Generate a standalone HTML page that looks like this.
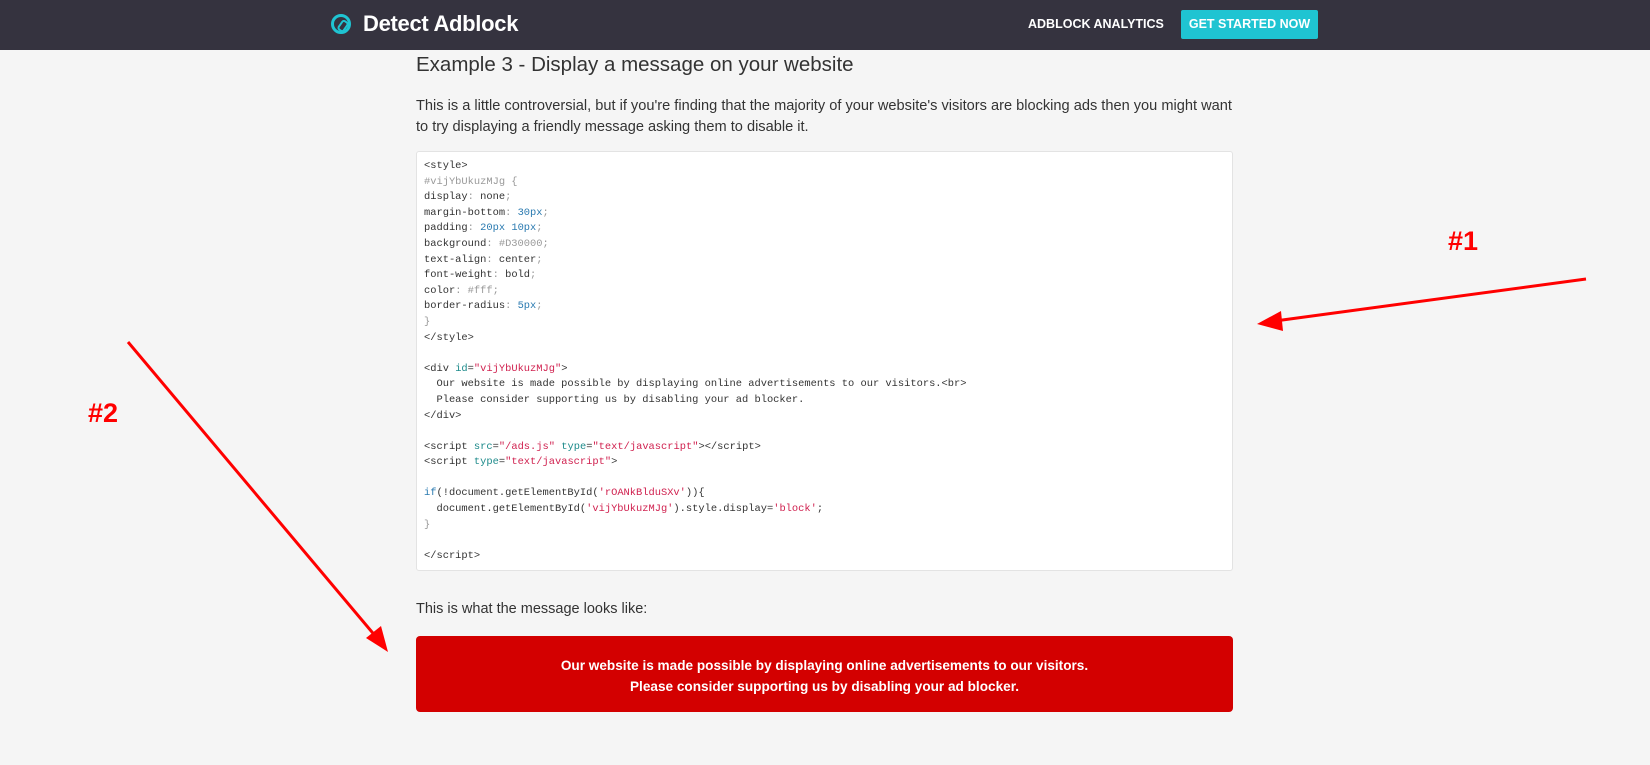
<!DOCTYPE html>
<html><head><meta charset="utf-8"><style>
*{margin:0;padding:0;box-sizing:border-box}
body{width:1650px;height:765px;background:#f5f5f5;font-family:"Liberation Sans",sans-serif;position:relative;overflow:hidden;color:#333}
.nav{position:absolute;left:0;top:0;width:1650px;height:50px;background:#35333f}
.logo{position:absolute;left:331px;top:14px;width:20px;height:20px;border:3px solid #1fc4d2;border-radius:50%}
.logo:after{content:"";position:absolute;left:5px;top:3px;width:4px;height:8px;border:2px solid #1fc4d2;border-radius:3px;transform:rotate(35deg)}
.brand{position:absolute;left:363px;top:11px;color:#fff;font-weight:bold;font-size:22px;letter-spacing:-0.3px}
.an{position:absolute;left:1028px;top:17px;color:#fff;font-weight:bold;font-size:12.5px}
.btn{position:absolute;left:1181px;top:10px;width:137px;height:29px;background:#1fc4d2;color:#fff;font-weight:bold;font-size:12.5px;text-align:center;line-height:29px;border-radius:2px}
h1{position:absolute;left:416px;top:53px;font-weight:normal;font-size:20.5px;color:#333}
.p{position:absolute;left:416px;top:96px;font-size:14.6px;line-height:20.5px;color:#333;width:830px}
.code{position:absolute;left:416px;top:151px;width:817px;height:420px;background:#fff;border:1px solid #e3e3e3;border-radius:3px;padding:7px 7px;font-family:"Liberation Mono",monospace;font-size:10.4px;line-height:15.6px;color:#333;white-space:pre}
.g{color:#999}.b{color:#2a7ab0}.r{color:#d0214f}.t{color:#1c8a8a}
.w{position:absolute;left:416px;top:601px;font-size:14.5px;color:#333}
.msg{position:absolute;left:416px;top:636px;width:817px;height:76px;background:#d30000;border-radius:4px;color:#fff;font-weight:bold;font-size:13.6px;text-align:center;padding-top:19px;line-height:21px}
.lab{position:absolute;color:#f00;font-weight:bold;font-size:27px}
</style></head><body>
<div class="nav"><div class="logo"></div><div class="brand">Detect Adblock</div><div class="an">ADBLOCK ANALYTICS</div><div class="btn">GET STARTED NOW</div></div>
<h1>Example 3 - Display a message on your website</h1>
<div class="p">This is a little controversial, but if you're finding that the majority of your website's visitors are blocking ads then you might want to try displaying a friendly message asking them to disable it.</div>
<div class="code">&lt;style&gt;
<span class="g">#vijYbUkuzMJg {</span>
display<span class="g">:</span> none<span class="g">;</span>
margin-bottom<span class="g">:</span> <span class="b">30px</span><span class="g">;</span>
padding<span class="g">:</span> <span class="b">20px 10px</span><span class="g">;</span>
background<span class="g">: #D30000;</span>
text-align<span class="g">:</span> center<span class="g">;</span>
font-weight<span class="g">:</span> bold<span class="g">;</span>
color<span class="g">: #fff;</span>
border-radius<span class="g">:</span> <span class="b">5px</span><span class="g">;</span>
<span class="g">}</span>
&lt;/style&gt;

&lt;div <span class="t">id</span>=<span class="r">"vijYbUkuzMJg"</span>&gt;
  Our website is made possible by displaying online advertisements to our visitors.&lt;br&gt;
  Please consider supporting us by disabling your ad blocker.
&lt;/div&gt;

&lt;script <span class="t">src</span>=<span class="r">"/ads.js"</span> <span class="t">type</span>=<span class="r">"text/javascript"</span>&gt;&lt;/script&gt;
&lt;script <span class="t">type</span>=<span class="r">"text/javascript"</span>&gt;

<span class="b">if</span>(!document.getElementById(<span class="r">'rOANkBlduSXv'</span>)){
  document.getElementById(<span class="r">'vijYbUkuzMJg'</span>).style.display=<span class="r">'block'</span>;
<span class="g">}</span>

&lt;/script&gt;</div>
<div class="w">This is what the message looks like:</div>
<div class="msg">Our website is made possible by displaying online advertisements to our visitors.<br>Please consider supporting us by disabling your ad blocker.</div>
<div class="lab" style="left:1448px;top:226px">#1</div>
<div class="lab" style="left:88px;top:398px">#2</div>
<svg width="1650" height="765" style="position:absolute;left:0;top:0">
<line x1="1586" y1="279" x2="1275" y2="321" stroke="#f00" stroke-width="3"/>
<polygon points="1257,324 1281,311 1283,331" fill="#f00"/>
<line x1="128" y1="342" x2="377" y2="638" stroke="#f00" stroke-width="3"/>
<polygon points="388,652 366,638 381,626" fill="#f00"/>
</svg>
</body></html>
